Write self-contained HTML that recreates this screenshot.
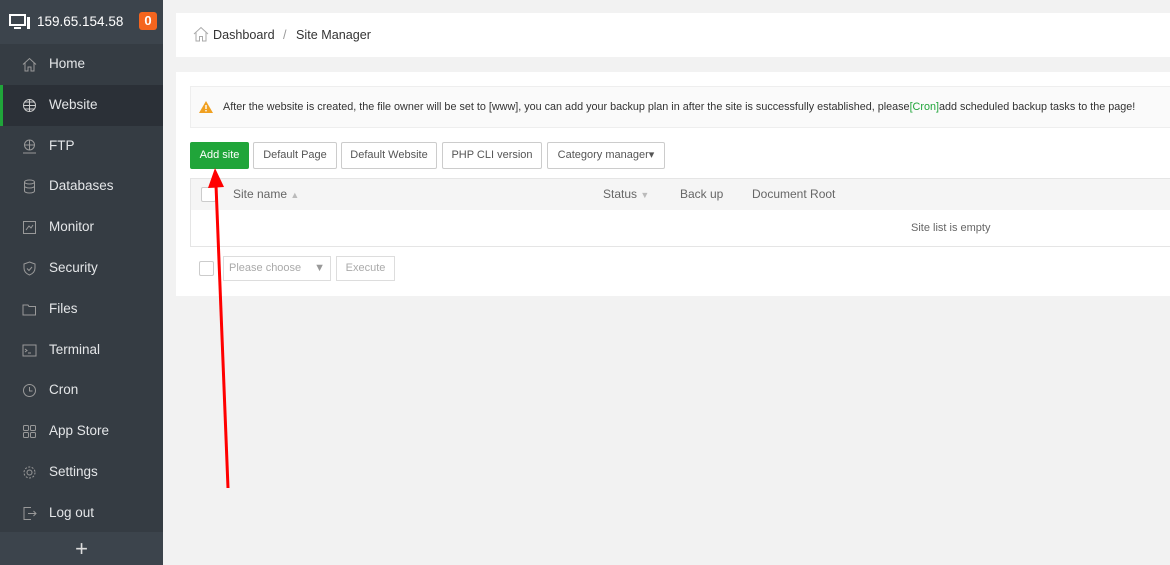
<!DOCTYPE html>
<html><head><meta charset="utf-8"><style>
*{box-sizing:border-box;margin:0;padding:0}
body{width:1170px;height:565px;overflow:hidden;background:#f2f2f2;font-family:"Liberation Sans",sans-serif;position:relative;font-size:12px;color:#555}
#side{position:absolute;left:0;top:0;width:163px;height:565px;background:#353c43}
#hd{height:44px;background:#3c444c;color:#fff;font-size:13.5px;position:relative}
#hd .ip{position:absolute;left:37px;top:14px}
#hd .b{position:absolute;left:139px;top:12px;width:18px;height:18px;background:#f5651e;border-radius:3px;color:#fff;font-weight:bold;text-align:center;line-height:18px;font-size:13px}
.mi{height:40.8px;line-height:40.8px;color:#e4e6e8;font-size:13.5px;padding-left:49px;position:relative}
.mi.act{background:#2b3037;border-left:3px solid #20a53a;padding-left:46px}
.mi svg{position:absolute;left:22px;top:13px}
.mi.act svg{left:19px}
#foot{position:absolute;left:0;bottom:0;width:163px;height:33px;background:#3c444c;color:#ddd;text-align:center;font-size:22px;line-height:33px}
.box{position:absolute;background:#fff}
.btn{position:absolute;top:142px;height:27px;border:1px solid #ccc;border-radius:2px;background:#fff;color:#555;font-size:11px;line-height:25px;text-align:center}
.cb{position:absolute;width:15px;height:15px;border:1px solid #ccc;background:#fff;border-radius:2px}
</style></head><body>
<div id="side">
<div id="hd"><svg style="position:absolute;left:9px;top:14px" width="22" height="16" viewBox="0 0 22 16"><rect x="1" y="1" width="15" height="10" fill="none" stroke="#fff" stroke-width="2"/><rect x="5" y="13" width="7" height="2" fill="#fff"/><rect x="18" y="3" width="3" height="12" fill="#fff"/></svg><span class="ip">159.65.154.58</span><span class="b">0</span></div>
<div class="mi"><svg width="15" height="15" viewBox="0 0 15 15" fill="none" stroke="#999"><path d="M1 7.5L7.5 1.5L14 7.5M3 6v8h3v-4h3v4h3V6"/></svg>Home</div>
<div class="mi act"><svg width="15" height="15" viewBox="0 0 15 15" fill="none" stroke="#ccc"><circle cx="7.5" cy="7.5" r="6"/><path d="M1.5 7.5h12M7.5 1.5v12M3 4h9M3 11h9"/></svg>Website</div>
<div class="mi"><svg width="15" height="15" viewBox="0 0 15 15" fill="none" stroke="#999"><circle cx="7.5" cy="6" r="5"/><path d="M2.5 6h10M7.5 1v10M1 14h13"/></svg>FTP</div>
<div class="mi"><svg width="15" height="15" viewBox="0 0 15 15" fill="none" stroke="#999"><ellipse cx="7.5" cy="3" rx="5" ry="2"/><path d="M2.5 3v9c0 1 2 2 5 2s5-1 5-2V3M2.5 7c0 1 2 2 5 2s5-1 5-2"/></svg>Databases</div>
<div class="mi"><svg width="15" height="15" viewBox="0 0 15 15" fill="none" stroke="#999"><rect x="1.5" y="1.5" width="12" height="12"/><path d="M4 10l3-4 2 2 2-3"/></svg>Monitor</div>
<div class="mi"><svg width="15" height="15" viewBox="0 0 15 15" fill="none" stroke="#999"><path d="M7.5 1L13 3v4c0 4-3 6-5.5 7C5 13 2 11 2 7V3z M5 7.5l2 2 3-3.5"/></svg>Security</div>
<div class="mi"><svg width="15" height="15" viewBox="0 0 15 15" fill="none" stroke="#999"><path d="M1 3h5l1 1.5h6.5V13H1z"/></svg>Files</div>
<div class="mi"><svg width="15" height="15" viewBox="0 0 15 15" fill="none" stroke="#999"><rect x="1" y="2" width="13" height="11"/><path d="M3 6l2 1.5L3 9M6 10h3"/></svg>Terminal</div>
<div class="mi"><svg width="15" height="15" viewBox="0 0 15 15" fill="none" stroke="#999"><circle cx="7.5" cy="7.5" r="6"/><path d="M7.5 4v4h3"/></svg>Cron</div>
<div class="mi"><svg width="15" height="15" viewBox="0 0 15 15" fill="none" stroke="#999"><rect x="1.5" y="1.5" width="5" height="5" rx="1"/><rect x="8.5" y="1.5" width="5" height="5" rx="1"/><rect x="1.5" y="8.5" width="5" height="5" rx="1"/><rect x="8.5" y="8.5" width="5" height="5" rx="1"/></svg>App Store</div>
<div class="mi"><svg width="15" height="15" viewBox="0 0 15 15" fill="none" stroke="#999"><circle cx="7.5" cy="7.5" r="2.5"/><circle cx="7.5" cy="7.5" r="5.5" stroke-dasharray="2 1.5"/></svg>Settings</div>
<div class="mi"><svg width="15" height="15" viewBox="0 0 15 15" fill="none" stroke="#999"><path d="M9 1.5H2v12h7M6 7.5h8M11.5 5l2.5 2.5L11.5 10"/></svg>Log out</div>
<div id="foot">+</div>
</div>

<div class="box" style="left:176px;top:13px;width:994px;height:44px;font-size:12.6px;color:#333;line-height:44px">
<svg style="position:absolute;left:17px;top:13px" width="16" height="16" viewBox="0 0 16 16" fill="none" stroke="#aaa"><path d="M1 8L8 1.5 15 8M3 6.5V15h3.5v-4.5h3V15H13V6.5"/></svg>
<span style="position:absolute;left:37px">Dashboard</span><span style="position:absolute;left:107px;color:#999">/</span><span style="position:absolute;left:120px">Site Manager</span></div>

<div class="box" style="left:176px;top:72px;width:994px;height:224px"></div>
<div style="position:absolute;left:190px;top:86px;width:980px;height:42px;background:#fafafa;border:1px solid #eee;border-right:none;font-size:10.8px;color:#333;line-height:40px;padding-left:32px;white-space:nowrap">
<svg style="position:absolute;left:8px;top:14px" width="14" height="12" viewBox="0 0 14 12"><path d="M7 0L14 12H0z" fill="#f0a020"/><rect x="6.3" y="4" width="1.4" height="4" fill="#fff"/><rect x="6.3" y="9" width="1.4" height="1.4" fill="#fff"/></svg>
After the website is created, the file owner will be set to [www], you can add your backup plan in after the site is successfully established, please<span style="color:#20a53a">[Cron]</span>add scheduled backup tasks to the page!</div>

<div class="btn" style="left:190px;width:59px;background:#20a53a;border-color:#20a53a;color:#fff">Add site</div>
<div class="btn" style="left:253px;width:84px">Default Page</div>
<div class="btn" style="left:341px;width:96px">Default Website</div>
<div class="btn" style="left:442px;width:100px">PHP CLI version</div>
<div class="btn" style="left:547px;width:118px">Category manager&#9662;</div>

<div style="position:absolute;left:190px;top:178px;width:980px;height:33px;background:#f5f5f5;border:1px solid #e5e5e5;border-right:none;font-size:12px;color:#666;line-height:31px">
<div class="cb" style="left:10px;top:8px"></div>
<span style="position:absolute;left:42px">Site name <span style="color:#bbb;font-size:9px">&#9650;</span></span>
<span style="position:absolute;left:412px">Status <span style="color:#bbb;font-size:9px">&#9660;</span></span>
<span style="position:absolute;left:489px">Back up</span>
<span style="position:absolute;left:561px">Document Root</span></div>
<div style="position:absolute;left:190px;top:210px;width:980px;height:37px;background:#fff;border:1px solid #e5e5e5;border-top:none;border-right:none;font-size:11px;color:#666;line-height:36px"><span style="position:absolute;left:720px">Site list is empty</span></div>

<div class="cb" style="left:199px;top:261px"></div>
<div style="position:absolute;left:223px;top:256px;width:108px;height:25px;border:1px solid #ddd;background:#fff;font-size:11px;color:#aaa;line-height:23px;padding-left:5px">Please choose<span style="position:absolute;right:5px;color:#999">&#9660;</span></div>
<div style="position:absolute;left:336px;top:256px;width:59px;height:25px;border:1px solid #ddd;background:#fff;font-size:11px;color:#aaa;line-height:23px;text-align:center">Execute</div>

<svg style="position:absolute;left:0;top:0" width="1170" height="565"><line x1="228" y1="488" x2="216" y2="185" stroke="#f00" stroke-width="3"/><path d="M215 168L208 188L224 187z" fill="#f00"/></svg>
</body></html>
